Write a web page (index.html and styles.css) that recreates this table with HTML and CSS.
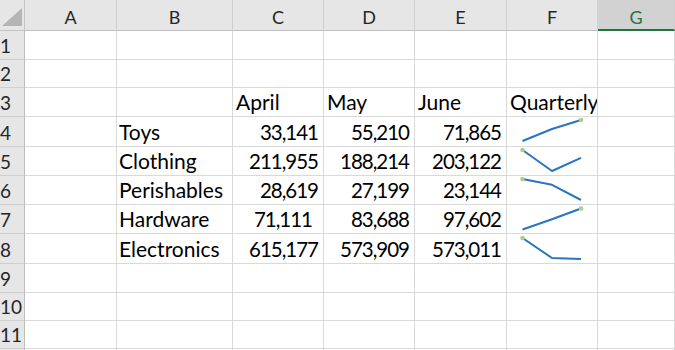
FILE: index.html
```html
<!DOCTYPE html>
<html>
<head>
<meta charset="utf-8">
<link rel="stylesheet" href="styles.css">
</head>
<body>
<div class="sheet">
  <div class="corner"><svg class="tri" width="24" height="30" viewBox="0 0 24 30"><polygon points="2,26 22,8 22,26" fill="#b5b5b5"/></svg></div>
  <div class="ch">A</div><div class="ch">B</div><div class="ch">C</div><div class="ch">D</div><div class="ch">E</div><div class="ch">F</div><div class="ch sel">G</div>

  <div class="rh">1</div><div class="c"></div><div class="c"></div><div class="c"></div><div class="c"></div><div class="c"></div><div class="c"></div><div class="c"></div>
  <div class="rh">2</div><div class="c"></div><div class="c"></div><div class="c"></div><div class="c"></div><div class="c"></div><div class="c"></div><div class="c"></div>
  <div class="rh">3</div><div class="c"></div><div class="c"></div><div class="c">April</div><div class="c">May</div><div class="c">June</div><div class="c">Quarterly</div><div class="c"></div>

  <div class="rh">4</div><div class="c"></div><div class="c lbl">Toys</div><div class="c num">33,141</div><div class="c num">55,210</div><div class="c num">71,865</div>
  <div class="c spark"><svg width="90" height="29" viewBox="0 0 90 29"><polyline points="15.5,24 45,12 74,3" /><circle cx="74" cy="3" r="2.3"/></svg></div><div class="c"></div>

  <div class="rh">5</div><div class="c"></div><div class="c lbl">Clothing</div><div class="c num">211,955</div><div class="c num">188,214</div><div class="c num">203,122</div>
  <div class="c spark"><svg width="90" height="28" viewBox="0 0 90 28"><polyline points="15.5,3 45,24 74,10.8" /><circle cx="15.5" cy="3" r="2.3"/></svg></div><div class="c"></div>

  <div class="rh">6</div><div class="c"></div><div class="c lbl">Perishables</div><div class="c num">28,619</div><div class="c num">27,199</div><div class="c num">23,144</div>
  <div class="c spark"><svg width="90" height="28" viewBox="0 0 90 28"><polyline points="15.5,3 45,8.8 74,24" /><circle cx="15.5" cy="3" r="2.3"/></svg></div><div class="c"></div>

  <div class="rh">7</div><div class="c"></div><div class="c lbl">Hardware</div><div class="c num pad">71,111</div><div class="c num">83,688</div><div class="c num">97,602</div>
  <div class="c spark"><svg width="90" height="28" viewBox="0 0 90 28"><polyline points="15.5,24.5 45,14.2 74,3.5" /><circle cx="74" cy="3.5" r="2.3"/></svg></div><div class="c"></div>

  <div class="rh">8</div><div class="c"></div><div class="c lbl">Electronics</div><div class="c num">615,177</div><div class="c num">573,909</div><div class="c num">573,011</div>
  <div class="c spark"><svg width="90" height="29" viewBox="0 0 90 29"><polyline points="15.5,4 45,24 74,25" /><circle cx="15.5" cy="4" r="2.3"/></svg></div><div class="c"></div>

  <div class="rh">9</div><div class="c"></div><div class="c"></div><div class="c"></div><div class="c"></div><div class="c"></div><div class="c"></div><div class="c"></div>
  <div class="rh">10</div><div class="c"></div><div class="c"></div><div class="c"></div><div class="c"></div><div class="c"></div><div class="c"></div><div class="c"></div>
  <div class="rh">11</div><div class="c"></div><div class="c"></div><div class="c"></div><div class="c"></div><div class="c"></div><div class="c"></div><div class="c"></div>
  <div class="rh"></div><div class="c"></div><div class="c"></div><div class="c"></div><div class="c"></div><div class="c"></div><div class="c"></div><div class="c"></div>
</div>
</body>
</html>
```

FILE: styles.css
```css
html, body {
  margin: 0;
  padding: 0;
  background: #ffffff;
  overflow: hidden;
}
body {
  width: 675px;
  height: 350px;
}
.sheet {
  display: grid;
  grid-template-columns: 25px 92px 116px 91px 91px 92px 91px 1fr;
  grid-template-rows: 31px 29px 28px 29px 30px 29px 29px 29px 30px 29px 28px 28px 29px;
  height: 350px;
  overflow: hidden;
  font-family: Lato, "Liberation Sans", sans-serif;
  color: #000;
}
.sheet > div {
  box-sizing: border-box;
  border-right: 1px solid #d9d9d9;
  border-bottom: 1px solid #d9d9d9;
  overflow: hidden;
  white-space: nowrap;
}
.corner {
  background: #e6e6e6;
  border-right-color: #c4c4c4 !important;
  border-bottom-color: #c4c4c4 !important;
}
.tri {
  display: block;
}
.ch {
  background: #e6e6e6;
  border-right-color: #cfcfcf !important;
  border-bottom-color: #bfbfbf !important;
  font-size: 18px;
  color: #262626;
  display: flex;
  justify-content: center;
  align-items: flex-end;
  padding-bottom: 2px;
  line-height: 22px;
}
.ch.sel {
  background: #d2d2d2;
  color: #217346;
  border-bottom: 2px solid #217346 !important;
  padding-bottom: 1px;
}
.rh {
  background: #e6e6e6;
  border-right-color: #bdbdbd !important;
  border-bottom-color: #cfcfcf !important;
  font-size: 19px;
  color: #262626;
  display: flex;
  align-items: flex-end;
  padding-left: 0;
  padding-bottom: 1px;
  line-height: 24px;
}
.c {
  font-size: 21px;
  display: flex;
  align-items: flex-end;
  padding-left: 3px;
  padding-right: 4px;
  padding-bottom: 1px;
  line-height: 26px;
}
.lbl {
  padding-left: 2px;
}
.num {
  justify-content: flex-end;
  font-size: 20.5px;
  letter-spacing: -1px;
  padding-right: 5px;
}
.num.pad {
  padding-right: 11px;
}
.spark {
  padding: 0;
  align-items: flex-start;
}
.spark svg {
  display: block;
}
.spark polyline {
  fill: none;
  stroke: #2b74c2;
  stroke-width: 2;
  stroke-linejoin: round;
}
.spark circle {
  fill: #a9d18e;
}
```
